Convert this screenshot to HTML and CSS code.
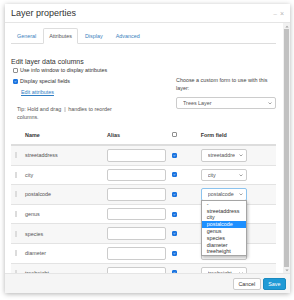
FILE: index.html
```html
<!DOCTYPE html>
<html>
<head>
<meta charset="utf-8">
<link rel="stylesheet" href="styles.css">
</head>
<body>
<div class="dialog">
  <div class="header">
    <span class="title">Layer properties</span>
    <span class="ctrls"><span class="min">_</span><span class="close">×</span></span>
  </div>
  <div class="scrollarea">
    <div class="content">
      <ul class="tabs">
        <li class="tab">General</li>
        <li class="tab active">Attributes</li>
        <li class="tab">Display</li>
        <li class="tab">Advanced</li>
      </ul>
      <h4 class="section-title">Edit layer data columns</h4>
      <div class="cols">
        <div class="col-left">
          <div class="check-row"><span class="cb"></span><span>Use info window to display attributes</span></div>
          <div class="check-row"><span class="cb on"><svg viewBox="0 0 10 10"><path d="M2 5.2 L4.2 7.3 L8 2.8" fill="none" stroke="#fff" stroke-width="1.8"/></svg></span><span>Display special fields</span></div>
          <a class="edit-link">Edit attributes</a>
          <p class="tip">Tip: Hold and drag <span class="handle inline"></span> handles to reorder columns.</p>
        </div>
        <div class="col-right">
          <p class="form-label">Choose a custom form to use with this layer:</p>
          <div class="select wide"><span class="sel-text">Trees Layer</span><svg class="chev" viewBox="0 0 8 5"><path d="M1 1 L4 4 L7 1" fill="none" stroke="#666" stroke-width="1.2"/></svg></div>
        </div>
      </div>
      <div class="table">
        <div class="tr head">
          <span></span><span>Name</span><span>Alias</span><span class="cb"></span><span>Form field</span>
        </div>
        <div class="tr odd">
          <span class="handle"></span><span class="name">streetaddress</span><span class="input"></span>
          <span class="cb on"><svg viewBox="0 0 10 10"><path d="M2 5.2 L4.2 7.3 L8 2.8" fill="none" stroke="#fff" stroke-width="1.8"/></svg></span>
          <span class="select"><span class="sel-text">streetaddre</span><svg class="chev" viewBox="0 0 8 5"><path d="M1 1 L4 4 L7 1" fill="none" stroke="#666" stroke-width="1.2"/></svg></span>
        </div>
        <div class="tr">
          <span class="handle"></span><span class="name">city</span><span class="input"></span>
          <span class="cb on"><svg viewBox="0 0 10 10"><path d="M2 5.2 L4.2 7.3 L8 2.8" fill="none" stroke="#fff" stroke-width="1.8"/></svg></span>
          <span class="select"><span class="sel-text">city</span><svg class="chev" viewBox="0 0 8 5"><path d="M1 1 L4 4 L7 1" fill="none" stroke="#666" stroke-width="1.2"/></svg></span>
        </div>
        <div class="tr odd">
          <span class="handle"></span><span class="name">postalcode</span><span class="input"></span>
          <span class="cb on"><svg viewBox="0 0 10 10"><path d="M2 5.2 L4.2 7.3 L8 2.8" fill="none" stroke="#fff" stroke-width="1.8"/></svg></span>
          <span class="select focus"><span class="sel-text">postalcode</span><svg class="chev" viewBox="0 0 8 5"><path d="M1 1 L4 4 L7 1" fill="none" stroke="#666" stroke-width="1.2"/></svg>
            <span class="dropdown">
              <span class="opt">-</span>
              <span class="opt">streetaddress</span>
              <span class="opt">city</span>
              <span class="opt sel">postalcode</span>
              <span class="opt">genus</span>
              <span class="opt">species</span>
              <span class="opt">diameter</span>
              <span class="opt">treeheight</span>
            </span>
          </span>
        </div>
        <div class="tr">
          <span class="handle"></span><span class="name">genus</span><span class="input"></span>
          <span class="cb on"><svg viewBox="0 0 10 10"><path d="M2 5.2 L4.2 7.3 L8 2.8" fill="none" stroke="#fff" stroke-width="1.8"/></svg></span>
          <span class="select"><span class="sel-text">genus</span><svg class="chev" viewBox="0 0 8 5"><path d="M1 1 L4 4 L7 1" fill="none" stroke="#666" stroke-width="1.2"/></svg></span>
        </div>
        <div class="tr odd">
          <span class="handle"></span><span class="name">species</span><span class="input"></span>
          <span class="cb on"><svg viewBox="0 0 10 10"><path d="M2 5.2 L4.2 7.3 L8 2.8" fill="none" stroke="#fff" stroke-width="1.8"/></svg></span>
          <span class="select"><span class="sel-text">species</span><svg class="chev" viewBox="0 0 8 5"><path d="M1 1 L4 4 L7 1" fill="none" stroke="#666" stroke-width="1.2"/></svg></span>
        </div>
        <div class="tr">
          <span class="handle"></span><span class="name">diameter</span><span class="input"></span>
          <span class="cb on"><svg viewBox="0 0 10 10"><path d="M2 5.2 L4.2 7.3 L8 2.8" fill="none" stroke="#fff" stroke-width="1.8"/></svg></span>
          <span class="select"><span class="sel-text">diameter</span><svg class="chev" viewBox="0 0 8 5"><path d="M1 1 L4 4 L7 1" fill="none" stroke="#666" stroke-width="1.2"/></svg></span>
        </div>
        <div class="tr odd">
          <span class="handle"></span><span class="name">treeheight</span><span class="input"></span>
          <span class="cb on"><svg viewBox="0 0 10 10"><path d="M2 5.2 L4.2 7.3 L8 2.8" fill="none" stroke="#fff" stroke-width="1.8"/></svg></span>
          <span class="select"><span class="sel-text">treeheight</span><svg class="chev" viewBox="0 0 8 5"><path d="M1 1 L4 4 L7 1" fill="none" stroke="#666" stroke-width="1.2"/></svg></span>
        </div>
      </div>
    </div>
    <div class="scrollbar">
      <div class="arrow"><svg viewBox="0 0 6 4"><path d="M0.5 3.5 L3 0.8 L5.5 3.5 Z" fill="#a3a3a3"/></svg></div>
      <div class="thumb"></div>
      <div class="arrow"><svg viewBox="0 0 6 4"><path d="M0.5 0.5 L3 3.2 L5.5 0.5 Z" fill="#a3a3a3"/></svg></div>
    </div>
  </div>
  <div class="footer">
    <button class="btn">Cancel</button>
    <button class="btn primary">Save</button>
  </div>
</div>
</body>
</html>
```
FILE: styles.css
```css
* { box-sizing: border-box; }
body {
  margin: 0;
  padding: 4px 4px 7px 5px;
  background: #fff;
  font-family: "Liberation Sans", Arial, sans-serif;
  font-size: 5.4px;
  color: #333;
}
.dialog {
  width: 285px;
  height: 289px;
  display: flex;
  flex-direction: column;
  background: #fff;
  box-shadow: 0 1px 5px rgba(0,0,0,0.3);
}
.header {
  flex: none;
  height: 19px;
  display: flex;
  align-items: center;
  justify-content: space-between;
  padding: 0 6px;
  border-bottom: 1px solid #e5e5e5;
}
.title { font-size: 9px; color: #333; }
.ctrls { display: flex; align-items: center; gap: 3px; color: #b5b5b5; font-size: 7px; }
.min { font-size: 6px; position: relative; top: -1px; }
.scrollarea {
  flex: 1;
  min-height: 0;
  display: flex;
}
.content {
  flex: 1;
  min-width: 0;
  overflow: hidden;
  padding: 5px 7px 0 6px;
}
.scrollbar {
  flex: none;
  width: 7px;
  background: #f1f1f1;
  display: flex;
  flex-direction: column;
}
.arrow { height: 6px; display: flex; align-items: center; justify-content: center; }
.arrow svg { width: 4px; height: 3px; }
.thumb { flex: 1; margin: 0 1px; background: #c1c1c1; }

.tabs {
  list-style: none;
  margin: 0;
  padding: 0;
  display: flex;
  height: 16px;
  border-bottom: 1px solid #ddd;
}
.tab {
  height: 16px;
  line-height: 14px;
  padding: 0 5px;
  margin-right: 1px;
  border: 1px solid transparent;
  border-radius: 2px 2px 0 0;
  color: #3a7fbd;
}
.tab.active {
  color: #555;
  background: #fff;
  border-color: #ddd #ddd transparent;
}
.section-title {
  margin: 14px 0 0;
  font-size: 7px;
  line-height: 8px;
  font-weight: normal;
  color: #333;
}
.cols { display: flex; }
.col-left { flex: 1; }
.check-row {
  display: flex;
  align-items: center;
  gap: 2px;
  height: 8px;
  margin-bottom: 3px;
  padding-left: 2px;
}
.cb {
  display: inline-block;
  width: 5px;
  height: 5px;
  border: 0.6px solid #8f8f8f;
  border-radius: 1px;
  background: #fff;
}
.cb.on { background: #1a74e0; border-color: #1a74e0; }
.cb svg { display: block; width: 100%; height: 100%; }
.edit-link {
  display: block;
  margin-top: 1px;
  padding-left: 10px;
  line-height: 8px;
  color: #2f7ec3;
  text-decoration: underline;
}
.tip {
  margin: 9px 0 0;
  padding-left: 6px;
  width: 110px;
  line-height: 8px;
  color: #555;
}
.handle {
  display: inline-block;
  width: 2px;
  height: 6px;
  background: #dcdcdc;
}
.handle.inline { height: 5px; vertical-align: -0.5px; margin: 0 1px; }
.col-right { width: 100px; padding-top: 11px; }
.form-label { margin: 0; line-height: 7.5px; color: #444; }
.select {
  position: relative;
  display: flex;
  align-items: center;
  justify-content: space-between;
  height: 12.6px;
  width: 46px;
  padding: 0 3px 0 6px;
  border: 1px solid #ccc;
  border-radius: 2px;
  background: #fff;
  color: #555;
}
.select.wide { width: 100px; height: 12px; margin-top: 5px; padding-left: 6px; }
.select.focus { border-color: #8cc3ee; }
.sel-text { white-space: nowrap; overflow: hidden; }
.chev { flex: none; width: 4px; height: 2.5px; }
.table { margin-top: 4px; }
.tr {
  display: grid;
  grid-template-columns: 14px 82px 65px 28.7px 1fr;
  align-items: center;
  height: 19.6px;
  border-bottom: 1px solid #e3e3e3;
}
.tr.head { height: 21px; border-bottom: 2px solid #ddd; font-weight: bold; color: #333; }
.tr.odd { background: #f7f7f7; }
.tr .handle { margin-left: 4px; }
.name { color: #555; }
.input {
  display: block;
  width: 59px;
  height: 12.6px;
  border: 1px solid #ccc;
  border-radius: 2px;
  background: #fff;
}
.dropdown {
  position: absolute;
  z-index: 5;
  top: 100%;
  left: -1px;
  width: 46px;
  display: flex;
  flex-direction: column;
  background: #fff;
  border: 1px solid #a5a5a5;
  box-shadow: 1px 2px 3px rgba(0,0,0,0.25);
  color: #333;
}
.opt { line-height: 6.8px; padding-left: 5px; white-space: nowrap; }
.opt.sel { background: #1e90ff; color: #fff; }
.footer {
  flex: none;
  height: 20px;
  display: flex;
  align-items: center;
  justify-content: flex-end;
  gap: 2px;
  padding-right: 4px;
  border-top: 1px solid #e5e5e5;
  background: #f5f5f5;
}
.btn {
  height: 12px;
  padding: 0 4.5px;
  font-family: "Liberation Sans", Arial, sans-serif;
  font-size: 5.4px;
  color: #333;
  background: #fff;
  border: 1px solid #ccc;
  border-radius: 2px;
}
.btn.primary { background: #1f9ad6; border-color: #1a8ac0; color: #fff; }
```
